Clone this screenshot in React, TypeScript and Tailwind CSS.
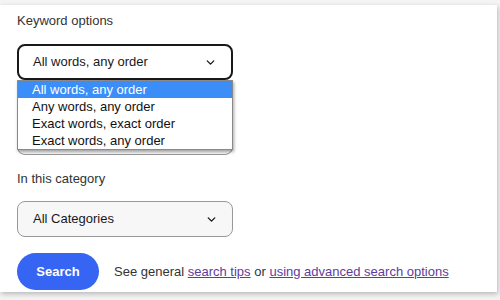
import { ChevronDown } from "lucide-react";

const options = [
  "All words, any order",
  "Any words, any order",
  "Exact words, exact order",
  "Exact words, any order",
];

const App = () => {
  return (
    <div className="w-[500px] h-[300px] bg-[#f4f4f4] overflow-hidden font-['Liberation_Sans',Arial,sans-serif] text-[#191919]">
      <div className="mt-[5px] w-[497px] h-[287px] bg-white shadow-[1px_2px_5px_rgba(0,0,0,0.25)] pl-[17px] pt-[6px]">
        <div className="text-[13px] leading-[20px] text-[#333]">Keyword options</div>

        <div className="relative mt-[13px] w-[216px]">
          <div className="h-[36px] border-2 border-[#191919] rounded-[8px] flex items-center justify-between pl-[14px] pr-[14px] text-[13px]">
            <span>All words, any order</span>
            <ChevronDown className="size-[13px]" strokeWidth={2.5} />
          </div>
          <div className="absolute left-0 top-[36px] w-[216px] bg-white border border-[#8a8a8a] shadow-[1px_2px_3px_rgba(0,0,0,0.35)] z-10">
            {options.map((o, i) => (
              <div
                key={o}
                className={
                  "h-[17px] leading-[17px] text-[13px] pl-[14px] " +
                  (i === 0 ? "bg-[#3b8ef7] text-white" : "text-[#111]")
                }
              >
                {o}
              </div>
            ))}
          </div>
        </div>

        <div className="mt-[39px] w-[216px] h-[36px] border border-[#999] rounded-[8px] bg-[#f7f7f7]" />

        <div className="mt-[14px] text-[13px] leading-[20px] text-[#333]">In this category</div>

        <div className="mt-[12px] w-[216px] h-[36px] border border-[#999] rounded-[8px] bg-[#f7f7f7] flex items-center justify-between pl-[15px] pr-[14px] text-[13px]">
          <span>All Categories</span>
          <ChevronDown className="size-[13px]" strokeWidth={2.5} />
        </div>

        <div className="mt-[16px] flex items-center">
          <button className="h-[37px] w-[82px] rounded-full bg-[#3665f3] text-white text-[13px] font-bold">
            Search
          </button>
          <p className="ml-[15px] text-[13px] text-[#333]">
            See general <a className="underline text-[#5e3c9e]">search tips</a> or{" "}
            <a className="underline text-[#5e3c9e]">using advanced search options</a>
          </p>
        </div>
      </div>
    </div>
  );
};

export default App;
